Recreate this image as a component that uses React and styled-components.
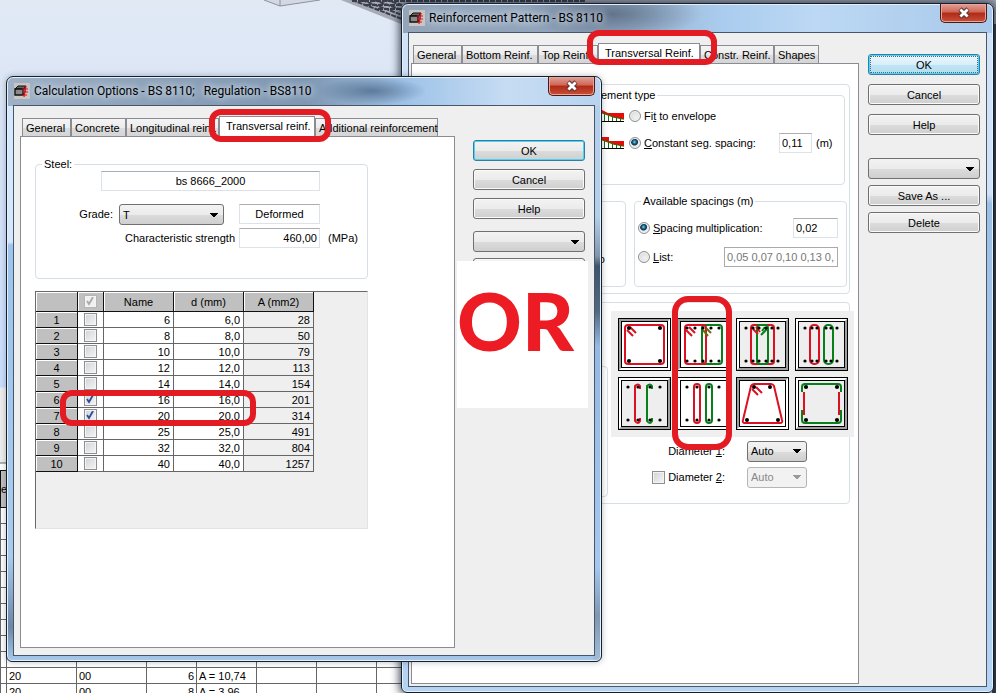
import React, { useState } from "react";
import styled, { createGlobalStyle, css } from "styled-components";

const RED = "#e31b23";
const UI_FONT = '"Liberation Sans", Arial, sans-serif';
const TITLE_FONT = 'Roboto, "Liberation Sans", sans-serif';

const bars = [
  { name: "6", d: "6,0", area: "28" },
  { name: "8", d: "8,0", area: "50" },
  { name: "10", d: "10,0", area: "79" },
  { name: "12", d: "12,0", area: "113" },
  { name: "14", d: "14,0", area: "154" },
  { name: "16", d: "16,0", area: "201", on: true },
  { name: "20", d: "20,0", area: "314", on: true },
  { name: "25", d: "25,0", area: "491" },
  { name: "32", d: "32,0", area: "804" },
  { name: "40", d: "40,0", area: "1257" },
];

const emptyRow = ["", "", "", ""];

const sheetRows = [
  ...Array(10).fill(emptyRow),
  ["20", "00", "6", "A = 10,74"],
  ["20", "00", "8", "A = 3,96"],
];

const sheetColumns = [6, 70, 70, 50, 60, 60, 60, 60];

const AppIcon = () => (
  <svg width="16" height="16" viewBox="0 0 16 16">
    <rect width="16" height="16" fill="#c9c5c0" />
    <path d="M1 6 L4 3 H12 L10 6 Z" fill="#666" stroke="#111" />
    <path d="M1 6 H9 V12 H1 Z" fill="#8a8a8a" stroke="#111" strokeWidth="1.4" />
    <path d="M9 12 L11 9 V4" fill="none" stroke="#111" />
    <path d="M8 6 H14 M8 9 H14 M8 12 H13 M12 3 L10 14" fill="none" stroke="#e01020" strokeWidth="1.2" />
  </svg>
);

const CloseIcon = () => (
  <svg width="14" height="12" viewBox="0 0 14 12">
    <path d="M3 2 L11 10 M11 2 L3 10" stroke="#5b3030" strokeWidth="4.6" />
    <path d="M3.4 2.4 L10.6 9.6 M10.6 2.4 L3.4 9.6" stroke="#fff" strokeWidth="2.8" />
  </svg>
);

const Dots = ({ xs, r = 1.6 }) =>
  xs.flatMap((x) => [
    <circle key={`${x}t`} cx={x} cy="10" r={r} fill="#000" />,
    <circle key={`${x}b`} cx={x} cy="43" r={r} fill="#000" />,
  ]);

const stirrups = [
  {
    name: "Single stirrup",
    bg: "#fff",
    down: true,
    art: (
      <>
        <rect x="7" y="7" width="39" height="39" rx="3" stroke="#dc1020" />
        <path d="M9 12 L15 18 M12 9 L18 15" stroke="#dc1020" />
        <Dots xs={[11, 42]} r={2.1} />
      </>
    ),
  },
  {
    name: "Overlapping stirrups",
    bg: "#fff",
    down: true,
    art: (
      <>
        <rect x="25" y="7" width="20" height="39" rx="3" stroke="#08801a" />
        <rect x="8" y="7" width="21" height="39" rx="3" stroke="#dc1020" />
        <path d="M9 12 L15 18 M12 9 L18 15" stroke="#dc1020" />
        <path d="M26 12 L31 18 M29 10 L34 15" stroke="#6a6a10" />
        <Dots xs={[10, 18, 26, 34, 42]} />
      </>
    ),
  },
  {
    name: "Nested stirrups",
    bg: "#eee",
    art: (
      <>
        <rect x="15" y="7" width="23" height="39" rx="3" stroke="#dc1020" />
        <rect x="21" y="7" width="11" height="39" rx="3" stroke="#08801a" />
        <path d="M17 11 L22 16 M20 9 L24 14" stroke="#dc1020" />
        <path d="M32 10 L25 17 M29 9 L26 13" stroke="#08801a" />
        <Dots xs={[10, 17, 23, 30, 36, 42]} />
      </>
    ),
  },
  {
    name: "Two closed links",
    bg: "#eee",
    art: (
      <>
        <rect x="15" y="7" width="9" height="39" rx="4" stroke="#dc1020" />
        <rect x="29" y="7" width="9" height="39" rx="4" stroke="#08801a" />
        <Dots xs={[10, 17, 22, 31, 36, 42]} />
      </>
    ),
  },
  {
    name: "Two pins",
    bg: "#eee",
    art: (
      <>
        <path d="M22 12 V9 Q20 6 17 9 V44 Q20 48 22 44 V41" stroke="#dc1020" />
        <path d="M34 12 V9 Q32 6 29 9 V44 Q32 48 34 44 V41" stroke="#08801a" />
        <Dots xs={[10, 20, 32, 42]} />
      </>
    ),
  },
  {
    name: "Two narrow links",
    bg: "#fff",
    art: (
      <>
        <rect x="17" y="7" width="6" height="39" rx="3" stroke="#dc1020" />
        <rect x="29" y="7" width="6" height="39" rx="3" stroke="#08801a" />
        <Dots xs={[10, 20, 32, 42]} />
      </>
    ),
  },
  {
    name: "Trapezoid stirrup",
    bg: "#fff",
    down: true,
    art: (
      <>
        <path d="M18 7 H35 Q37 7 38 9 L46 43 Q47 46 44 46 H9 Q6 46 7 43 L15 9 Q16 7 18 7 Z" stroke="#dc1020" />
        <path d="M16 12 L22 18 M20 10 L26 16" stroke="#dc1020" />
        <circle cx="18" cy="10" r="2" fill="#000" />
        <circle cx="34" cy="10" r="2" fill="#000" />
        <circle cx="11" cy="43" r="2" fill="#000" />
        <circle cx="42" cy="43" r="2" fill="#000" />
      </>
    ),
  },
  {
    name: "U bars",
    bg: "#eee",
    art: (
      <>
        <path d="M7 15 V10 Q7 7 10 7 H43 Q46 7 46 10 V15" stroke="#08801a" />
        <path d="M7 33 V43 Q7 46 10 46 H43 Q46 46 46 43 V33" stroke="#08801a" />
        <path d="M9 15 V38 M44 15 V38" stroke="#dc1020" />
        <Dots xs={[11, 42]} r={2.1} />
      </>
    ),
  },
];

const StirrupArt = ({ bg, down, art }) => (
  <svg width="53" height="53" viewBox="0 0 53 53">
    <rect width="53" height="53" fill="#000" />
    <path d="M1 1 H52 V52 H1 Z" fill="#fff" />
    {down ? (
      <path d="M1 1 H52 L50 3 H3 V50 L1 52 Z" fill="#a0a0a0" />
    ) : (
      <path d="M52 1 V52 H1 L3 50 H50 V3 Z" fill={bg === "#fff" ? "#fff" : "#a0a0a0"} />
    )}
    <rect x="3.5" y="3.5" width="46" height="46" fill={bg} stroke="#000" />
    <g fill="none" strokeWidth="2">
      {art}
    </g>
  </svg>
);

const Envelope = ({ stepped }) => (
  <svg width="30" height="12" viewBox="0 0 30 12">
    <path
      d={stepped ? "M0 0 H15 V4 H30 V9 L20 7 L9 3 L0 1 Z" : "M0 0 H8 L14 3 H30 V9 L20 7 L9 3 L0 1 Z"}
      fill="#f00808"
    />
    <path d="M10.5 4 V11 M14.5 5 V11 M18.5 7 V11 M22.5 8 V11 M26.5 9 V11" stroke="#087010" />
    <path d="M0 1 L9 3 L20 7 L30 9" fill="none" stroke="#6a4a08" strokeWidth="1.4" />
    <path d="M0 11.5 H30" stroke="#000" />
  </svg>
);

const Dialog = ({ title, place: Place, inset, children }) => (
  <Place role="dialog" aria-label={title}>
    <TitleBar>
      <AppIcon />
      <Title>{title}</Title>
      <CloseButton type="button" aria-label="Close">
        <CloseIcon />
      </CloseButton>
    </TitleBar>
    <Client $inset={inset}>{children}</Client>
  </Place>
);

const TabStrip = ({ tabs, active, onPick }) => (
  <Tabs role="tablist">
    {tabs.map((x) => (
      <Tab
        key={x.label}
        type="button"
        role="tab"
        aria-selected={x.label === active}
        $width={x.width}
        $active={x.label === active}
        onClick={() => onPick(x.label)}
      >
        {x.label}
      </Tab>
    ))}
  </Tabs>
);

const calcTabs = [
  { label: "General", width: 49 },
  { label: "Concrete", width: 55 },
  { label: "Longitudinal reinf.", width: 93 },
  { label: "Transversal reinf.", width: 96 },
  { label: "Additional reinforcement", width: 123 },
];

const patternTabs = [
  { label: "General", width: 49 },
  { label: "Bottom Reinf.", width: 76 },
  { label: "Top Reinf.", width: 60 },
  { label: "Transversal Reinf.", width: 102 },
  { label: "Constr. Reinf.", width: 74 },
  { label: "Shapes", width: 45 },
];

const CalculationOptions = () => {
  const [tab, setTab] = useState("Transversal reinf.");
  const [checked, setChecked] = useState(bars.map((x) => !!x.on));

  const toggle = (i) => setChecked(checked.map((x, k) => (k === i ? !x : x)));

  return (
    <Dialog
      title={"Calculation Options - BS 8110;\u00a0\u00a0\u00a0Regulation - BS8110"}
      place={CalcPlace}
      inset="10px 9px 7px 6px"
    >
      <Main>
        <TabStrip tabs={calcTabs} active={tab} onPick={setTab} />
        <CalcPanel>
          <SteelGroup>
            <legend>Steel:</legend>
            <SteelGrid>
              <SteelName aria-label="Steel" defaultValue="bs 8666_2000" />
              <GradeLabel htmlFor="grade">Grade:</GradeLabel>
              <Combo id="grade" $width={105}>
                <option>T</option>
              </Combo>
              <CenterBox aria-label="Surface" defaultValue="Deformed" />
              <StrengthLabel htmlFor="strength">Characteristic strength</StrengthLabel>
              <RightBox id="strength" defaultValue="460,00" />
              <span>(MPa)</span>
            </SteelGrid>
          </SteelGroup>
          <Sunken>
            <BarTable>
              <thead>
                <tr>
                  <th></th>
                  <th>
                    <Check type="checkbox" aria-label="All" checked disabled readOnly />
                  </th>
                  <th>Name</th>
                  <th>d (mm)</th>
                  <th>A (mm2)</th>
                </tr>
              </thead>
              <tbody>
                {bars.map((x, i) => (
                  <tr key={x.name}>
                    <th>{i + 1}</th>
                    <td>
                      <Check
                        type="checkbox"
                        aria-label={`Bar ${x.name}`}
                        checked={checked[i]}
                        onChange={() => toggle(i)}
                      />
                    </td>
                    <td>{x.name}</td>
                    <td>{x.d}</td>
                    <td>{x.area}</td>
                  </tr>
                ))}
              </tbody>
            </BarTable>
          </Sunken>
        </CalcPanel>
      </Main>
      <CalcSide>
        <PushButton type="button" $primary>
          OK
        </PushButton>
        <PushButton type="button">Cancel</PushButton>
        <PushButton type="button">Help</PushButton>
        <SavedGroup $space={4}>
          <Combo aria-label="Saved options" />
          <PushButton type="button" aria-label="Save" />
        </SavedGroup>
        <OrNote>OR</OrNote>
      </CalcSide>
      <TabMark />
      <RowsMark />
    </Dialog>
  );
};

const ReinforcementPattern = () => {
  const [tab, setTab] = useState("Transversal Reinf.");

  return (
    <Dialog title="Reinforcement Pattern - BS 8110" place={PatternPlace} inset="10px 6px 2px 2px">
      <Main>
        <TabStrip tabs={patternTabs} active={tab} onPick={setTab} />
        <PatternPanel>
          <Section>
            <TypeGroup>
              <legend>Reinforcement type</legend>
              <TypeRow>
                <Envelope />
                <Radio type="radio" name="type" id="fit" />
                <label htmlFor="fit">
                  Fi<u>t</u> to envelope
                </label>
              </TypeRow>
              <TypeRow>
                <Envelope stepped />
                <Radio type="radio" name="type" id="seg" defaultChecked />
                <label htmlFor="seg">
                  <u>C</u>onstant seg. spacing:
                </label>
                <SegBox aria-label="Segment spacing" defaultValue="0,11" />
                <span>(m)</span>
              </TypeRow>
            </TypeGroup>
            <SpacingColumns>
              <AutoGroup>Auto</AutoGroup>
              <SpacingGroup>
                <legend>Available spacings (m)</legend>
                <SpacingRow>
                  <Radio type="radio" name="spacing" id="multi" defaultChecked />
                  <label htmlFor="multi">
                    <u>S</u>pacing multiplication:
                  </label>
                  <MultiBox aria-label="Multiplication" defaultValue="0,02" />
                </SpacingRow>
                <SpacingRow>
                  <Radio type="radio" name="spacing" id="list" />
                  <label htmlFor="list">
                    <u>L</u>ist:
                  </label>
                  <ListBox aria-label="Spacing list" disabled defaultValue="0,05 0,07 0,10 0,13 0,15" />
                </SpacingRow>
              </SpacingGroup>
            </SpacingColumns>
          </Section>
          <Section>
            <ShapeColumns>
              <SideGroup />
              <div>
                <StirrupGrid>
                  {stirrups.map((x) => (
                    <StirrupButton key={x.name} type="button" aria-label={x.name}>
                      <StirrupArt {...x} />
                    </StirrupButton>
                  ))}
                  <ShapeMark />
                </StirrupGrid>
                <DiameterRow>
                  <label htmlFor="dia1">
                    Diameter <u>1</u>:
                  </label>
                  <Combo id="dia1" $width={60}>
                    <option>Auto</option>
                  </Combo>
                </DiameterRow>
                <DiameterRow>
                  <Check type="checkbox" id="use2" />
                  <label htmlFor="use2">
                    Diameter <u>2</u>:
                  </label>
                  <Combo aria-label="Diameter 2" disabled $width={60}>
                    <option>Auto</option>
                  </Combo>
                </DiameterRow>
              </div>
            </ShapeColumns>
          </Section>
        </PatternPanel>
      </Main>
      <PatternSide>
        <PushButton type="button" $primary $focus>
          OK
        </PushButton>
        <PushButton type="button">Cancel</PushButton>
        <PushButton type="button">Help</PushButton>
        <SavedGroup $space={14}>
          <Combo aria-label="Saved patterns" />
          <PushButton type="button">Save As ...</PushButton>
          <PushButton type="button">Delete</PushButton>
        </SavedGroup>
      </PatternSide>
      <PatternTabMark />
    </Dialog>
  );
};

export default function App() {
  return (
    <Desktop>
      <GlobalStyle />
      <Scene viewBox="0 0 740 24" width="740" height="24">
        <path d="M8 0 L24 6 L64 0" fill="#d3d8e2" stroke="#8d929c" />
        <path d="M24 0 V6" stroke="#8d929c" />
        <path d="M85 0 L145 24 H740 V0 Z" fill="#a7abb8" />
        <path
          d="M96 0 L146 19 M106 0 L146 15 M118 0 L146 10 M130 0 L146 5 M96 1 H330 M110 5 H146 M122 9 H146"
          stroke="#3b3e4a"
          strokeWidth="2"
          strokeDasharray="5 1"
        />
      </Scene>
      <Sheet>
        <colgroup>
          {sheetColumns.map((x, i) => (
            <col key={i} width={x} />
          ))}
        </colgroup>
        <thead>
          <tr>
            <th>e</th>
            <th colSpan={7}></th>
          </tr>
        </thead>
        <tbody>
          {sheetRows.map((r, i) => (
            <tr key={i}>
              <td></td>
              {r.map((c, k) => (
                <td key={k}>{c}</td>
              ))}
              <td></td>
              <td></td>
              <td></td>
            </tr>
          ))}
        </tbody>
      </Sheet>
      <ReinforcementPattern />
      <CalculationOptions />
    </Desktop>
  );
}

const GlobalStyle = createGlobalStyle`
  * {
    box-sizing: border-box;
  }

  body {
    margin: 0;
    overflow: hidden;
    font: 11px/14px ${UI_FONT};
    color: #000;
  }

  button, input, select {
    font: inherit;
    color: inherit;
    margin: 0;
  }
`;

const Desktop = styled.div`
  position: relative;
  display: flex;
  flex-direction: column;
  justify-content: flex-end;
  align-items: flex-start;
  height: 100vh;
  overflow: hidden;
  background:
    linear-gradient(#3a3f48, #3a3f48) no-repeat 100% 20px / 4px 100%,
    linear-gradient(#e1e9f5 0, #dbe6f6 90px, #cbdffe 387px, #eee 388px, #eee 462px, #666 463px, #fff 464px);
`;

const Scene = styled.svg`
  position: absolute;
  top: 0;
  left: 256px;
`;

const Sheet = styled.table`
  flex: none;
  border-collapse: collapse;
  table-layout: fixed;
  width: 436px;
  margin-bottom: -7px;
  background: #fff;

  th {
    height: 37px;
    padding: 0;
    border: 1px solid #111;
    background: #c0c0c0;
    font-weight: 400;
  }

  td {
    height: 16px;
    padding: 0 2px;
    border: 1px solid #666;
    line-height: 14px;
    white-space: nowrap;
  }

  td:first-child {
    padding: 0;
  }

  td:nth-child(4) {
    text-align: right;
  }
`;

const frame = css`
  position: absolute;
  display: flex;
  flex-direction: column;
  padding: 0 6px 5px;
  border: 1px solid #15202c;
  border-radius: 7px 7px 6px 6px;
`;

const PatternPlace = styled.section`
  ${frame}
  top: 3px;
  right: 2px;
  bottom: 0;
  left: 401px;
  box-shadow: inset 0 0 0 1px #e3f0fc, 0 0 9px 2px rgba(20, 30, 45, 0.75);
  background:
    radial-gradient(ellipse 90px 26px at 210px 10px, rgba(85, 102, 124, 0.8), transparent) no-repeat 0 0 / 400px 28px,
    linear-gradient(90deg, #94a5ba, #8fa3bb 180px, #aaccee 320px, #bcd8f4 70%, #a9c9ea) no-repeat 0 0 / 100% 29px,
    linear-gradient(#cfe2f6 0, #cfe2f6 190px, #9dbfe2 200px, #b5d4f4 100%);
`;

const CalcPlace = styled.section`
  ${frame}
  top: 76px;
  bottom: 31px;
  left: 6px;
  width: 596px;
  box-shadow: inset 0 0 0 1px #e3f0fc, 0 0 6px rgba(20, 30, 45, 0.3);
  background:
    radial-gradient(ellipse at center, rgba(80, 108, 140, 0.8) 0, transparent 70%) no-repeat 310px 0 / 110px 28px,
    linear-gradient(#b3cfea 0, #b3cfea 110px, #8296ac 150px, #3f546c 160px, #54687e 205px, #94b9e2 240px, #a4c8ee 460px, #7f97b0 510px, #b5d3f0 580px)
      no-repeat 100% 29px / 8px 100%,
    linear-gradient(90deg, #9eb1c7, #8fa3ba 120px, #7f97b2 300px, #9fc3e8 400px, #c6dcf3 500px, #b9d3ee) no-repeat 0 0 / 100% 29px,
    linear-gradient(#d5e8fb 0, #d5e8fb 165px, #9dc4ec 168px, #a9cbed 480px, #6d87a5 550px, #a9cbed 100%);
`;

const TitleBar = styled.header`
  display: flex;
  flex: 0 0 28px;
  align-items: center;
  gap: 4px;
  padding: 0 0 0 1px;
`;

const Title = styled.h2`
  flex: 1;
  margin: 0;
  font: 400 12px/16px ${TITLE_FONT};
  white-space: nowrap;
  text-shadow: 0 0 6px #dfe8f2, 0 0 10px #dfe8f2;
`;

const CloseButton = styled.button`
  display: grid;
  place-items: center;
  align-self: flex-start;
  width: 47px;
  height: 19px;
  padding: 0;
  border: 1px solid #4b1a14;
  border-top: 0;
  border-radius: 0 0 5px 5px;
  box-shadow: inset 0 0 0 1px #e9a59a;
  background: linear-gradient(#e0a095, #cf6657 45%, #b02a15 50%, #c8503a);
`;

const Client = styled.div`
  position: relative;
  display: flex;
  flex: 1;
  padding: ${(p) => p.$inset};
  border: 1px solid #46566b;
  background: #efefef;
`;

const Main = styled.div`
  display: flex;
  flex: 1;
  flex-direction: column;
  min-width: 0;
`;

const Tabs = styled.div`
  display: flex;
  align-items: flex-end;
  height: 20px;
  padding-left: 2px;
`;

const Tab = styled.button`
  width: ${(p) => p.$width}px;
  height: 18px;
  padding: 0 0 0 3px;
  border: 1px solid #8b8b93;
  border-bottom: 0;
  background: linear-gradient(#f4f4f4, #ececec 50%, #dcdcdc 52%, #d5d5d5);
  text-align: left;
  white-space: nowrap;

  ${(p) =>
    p.$active &&
    css`
      z-index: 1;
      height: 21px;
      margin-bottom: -1px;
      padding: 0 0 2px 6px;
      background: #fff;
    `}
`;

const Panel = styled.div`
  flex: 1;
  border: 1px solid #8b8b93;
  background: #fff;
`;

const CalcPanel = styled(Panel)`
  padding: 20px 86px 0 14px;
`;

const PatternPanel = styled(Panel)`
  display: flex;
  flex-direction: column;
  gap: 8px;
  padding: 20px 8px 0;
`;

const Group = styled.fieldset`
  min-width: 0;
  margin: 0;
  padding: 0;
  border: 1px solid #d5dfe5;
  border-radius: 4px;

  legend {
    margin-left: 6px;
    padding: 0 2px;
  }
`;

const SteelGroup = styled(Group)`
  height: 122px;
`;

const SteelGrid = styled.div`
  display: grid;
  grid-template-columns: 43px 18px 105px 15px 81px auto;
  grid-template-rows: 33px 24px 20px;
  align-items: start;
  justify-content: start;
  padding-left: 22px;
  line-height: 20px;

  span {
    padding-left: 8px;
  }
`;

const TextBox = styled.input`
  width: 100%;
  min-width: 0;
  height: 20px;
  padding: 0 2px;
  border: 1px solid #dde1e8;
  border-top-color: #abadb3;
  background: #fff;

  &:disabled {
    border-color: #aaa;
    color: #777;
  }
`;

const SteelName = styled(TextBox)`
  grid-column: 2 / 6;
  grid-row: 1;
  text-align: center;
`;

const GradeLabel = styled.label`
  grid-column: 1 / 3;
  padding-right: 6px;
  text-align: right;
`;

const CenterBox = styled(TextBox)`
  grid-column: 5;
  text-align: center;
`;

const StrengthLabel = styled.label`
  grid-column: 1 / 5;
  padding-right: 4px;
  text-align: right;
`;

const RightBox = styled(TextBox)`
  text-align: right;
`;

const arrow = (color) =>
  `linear-gradient(to bottom right, ${color} 50%, transparent 52%) no-repeat right 5px center / 4px 4px,
   linear-gradient(to bottom left, ${color} 50%, transparent 52%) no-repeat right 9px center / 4px 4px`;

const Combo = styled.select`
  appearance: none;
  width: ${(p) => (p.$width ? `${p.$width}px` : "100%")};
  height: 21px;
  padding: 0 3px;
  border: 1px solid #707070;
  border-radius: 3px;
  background: ${arrow("#000")}, linear-gradient(#f3f3f3, #ebebeb 50%, #dcdcdc 51%, #cfcfcf);

  &:disabled {
    border-color: #b5b5b5;
    background: ${arrow("#999")}, #f2f2f2;
    color: #888;
    opacity: 1;
  }
`;

const Check = styled.input`
  appearance: none;
  display: block;
  flex: none;
  width: 13px;
  height: 13px;
  border: 1px solid #8e8f8f;
  box-shadow: inset 0 0 0 1px #f4f4f4;
  background: linear-gradient(135deg, #cfd3d8, #f6f6f6);

  &:checked {
    background:
      url("data:image/svg+xml,%3Csvg xmlns='http://www.w3.org/2000/svg' viewBox='0 0 11 11'%3E%3Cpath d='M2 5l2 3 4-7' fill='none' stroke='%232f4c9b' stroke-width='1.8'/%3E%3C/svg%3E"),
      linear-gradient(135deg, #cfd3d8, #f6f6f6);
  }

  &:disabled {
    background:
      url("data:image/svg+xml,%3Csvg xmlns='http://www.w3.org/2000/svg' viewBox='0 0 11 11'%3E%3Cpath d='M2 5l2 3 4-7' fill='none' stroke='%23aaaaaa' stroke-width='1.8'/%3E%3C/svg%3E"),
      #f0f0f0;
    border-color: #b5b5b5;
  }
`;

const Radio = styled.input`
  appearance: none;
  flex: none;
  width: 12px;
  height: 12px;
  border: 1px solid #8e8f8f;
  border-radius: 50%;
  box-shadow: inset 0 0 0 1px #f4f4f4;
  background: radial-gradient(circle at 60% 60%, #f2f2f2, #cfd3d8);

  &:checked {
    background: radial-gradient(circle at 45% 40%, #7fd0f0 0, #125a80 2px, #0b3049 3px, #e4e8ea 4px);
  }
`;

const Sunken = styled.div`
  height: 238px;
  margin-top: 12px;
  border: 1px solid #e3e3e3;
  border-top: 1px solid #696969;
  border-left: 1px solid #696969;
  background: #efefef;
`;

const BarTable = styled.table`
  border-collapse: separate;
  border-spacing: 0;
  table-layout: fixed;
  width: 278px;

  th,
  td {
    height: 16px;
    padding: 0 3px 0 0;
    border-right: 1px solid #666;
    border-bottom: 1px solid #666;
    background: #fff;
    line-height: 14px;
    text-align: right;
  }

  th {
    padding: 0;
    border-color: #111;
    box-shadow: inset 1px 1px #fff;
    background: #c0c0c0;
    font-weight: 400;
    text-align: center;
  }

  thead th {
    height: 20px;
  }

  th:nth-child(1) {
    width: 42px;
  }

  th:nth-child(2) {
    width: 26px;
  }

  td:nth-child(2) {
    padding: 0;
  }

  td:last-child {
    background: #efefef;
  }

  input {
    margin: 0 auto;
  }
`;

const Side = styled.div`
  display: flex;
  flex: 0 0 112px;
  flex-direction: column;
`;

const CalcSide = styled(Side)`
  position: relative;
  gap: 8px;
  margin-left: 18px;
  padding-top: 24px;
`;

const PatternSide = styled(Side)`
  gap: 9px;
  margin-left: 9px;
  padding-top: 11px;
`;

const SavedGroup = styled.div`
  display: flex;
  flex-direction: column;
  gap: 6px;
  margin-top: ${(p) => p.$space}px;
`;

const PushButton = styled.button`
  height: 21px;
  padding: 0;
  border: 1px solid #707070;
  border-radius: 3px;
  box-shadow: inset 0 0 0 1px #fafafa;
  background: linear-gradient(#f3f3f3, #ebebeb 50%, #dcdcdc 51%, #cfcfcf);

  ${(p) =>
    p.$primary &&
    css`
      border-color: #2d7fa5;
      box-shadow: inset 0 0 0 1px #4fd2f4;
    `}

  ${(p) =>
    p.$focus &&
    css`
      background: linear-gradient(#eaf6fd, #d8eff9 50%, #bee6f6 51%, #b4dcec);
      outline: 1px dotted #4a6a7a;
      outline-offset: -3px;
    `}
`;

const OrNote = styled.strong`
  position: absolute;
  top: 145px;
  right: -3px;
  width: 131px;
  height: 147px;
  padding-top: 9px;
  background: #fff;
  color: #ed1c24;
  font: 900 80px/100px Lato, sans-serif;
`;

const Mark = styled.i`
  position: absolute;
  z-index: 2;
  border: 6px solid ${RED};
  border-radius: 12px;
  pointer-events: none;
`;

const TabMark = styled(Mark)`
  top: 3px;
  left: 195px;
  width: 122px;
  height: 33px;
`;

const RowsMark = styled(Mark)`
  top: 284px;
  left: 46px;
  width: 196px;
  height: 36px;
`;

const PatternTabMark = styled(Mark)`
  top: -3px;
  left: 178px;
  width: 130px;
  height: 35px;
`;

const ShapeMark = styled(Mark)`
  top: -15px;
  left: 61px;
  width: 60px;
  height: 154px;
  border-radius: 16px;
`;

const Section = styled.div`
  padding: 3px 4px 6px;
  border: 1px solid #d5dfe5;
  border-radius: 4px;
`;

const TypeGroup = styled(Group)`
  height: 97px;

  legend {
    margin-left: 132px;
  }
`;

const TypeRow = styled.div`
  display: flex;
  align-items: center;
  height: 27px;
  padding-left: 168px;

  input[type="radio"] {
    margin: 0 3px 0 5px;
  }

  span {
    margin-left: 4px;
  }
`;

const SegBox = styled(TextBox)`
  width: 33px;
  margin-left: auto;

  & + span {
    width: 28px;
  }
`;

const SpacingColumns = styled.div`
  display: grid;
  grid-template-columns: 1fr 213px;
  gap: 8px;
  margin: 9px -2px 0 0;
`;

const AutoGroup = styled(Group)`
  height: 86px;
  margin-top: 7px;
  padding: 50px 20px 0 0;
  text-align: right;
`;

const SpacingGroup = styled(Group)`
  height: 93px;
  padding-top: 5px;
`;

const SpacingRow = styled.div`
  display: flex;
  align-items: center;
  gap: 3px;
  height: 29px;
  padding: 0 8px 0 3px;
`;

const MultiBox = styled(TextBox)`
  width: 45px;
  margin-left: auto;
`;

const ListBox = styled(TextBox)`
  width: 114px;
  margin-left: auto;
`;

const ShapeColumns = styled.div`
  display: grid;
  grid-template-columns: 1fr 243px;
  gap: 3px;
  margin: 5px -9px 0 0;
`;

const SideGroup = styled(Group)`
  height: 131px;
  margin-top: 55px;
`;

const StirrupGrid = styled.div`
  position: relative;
  display: grid;
  grid-template-columns: repeat(4, 53px);
  gap: 6px;
  padding: 7px;
  margin-bottom: 1px;
  background: #efefef;
`;

const StirrupButton = styled.button`
  height: 53px;
  padding: 0;
  border: 0;
  background: none;

  svg {
    display: block;
  }
`;

const DiameterRow = styled.div`
  display: flex;
  align-items: center;
  justify-content: flex-end;
  gap: 3px;
  height: 26px;
  padding-right: 47px;

  select {
    margin-left: 19px;
  }
`;
